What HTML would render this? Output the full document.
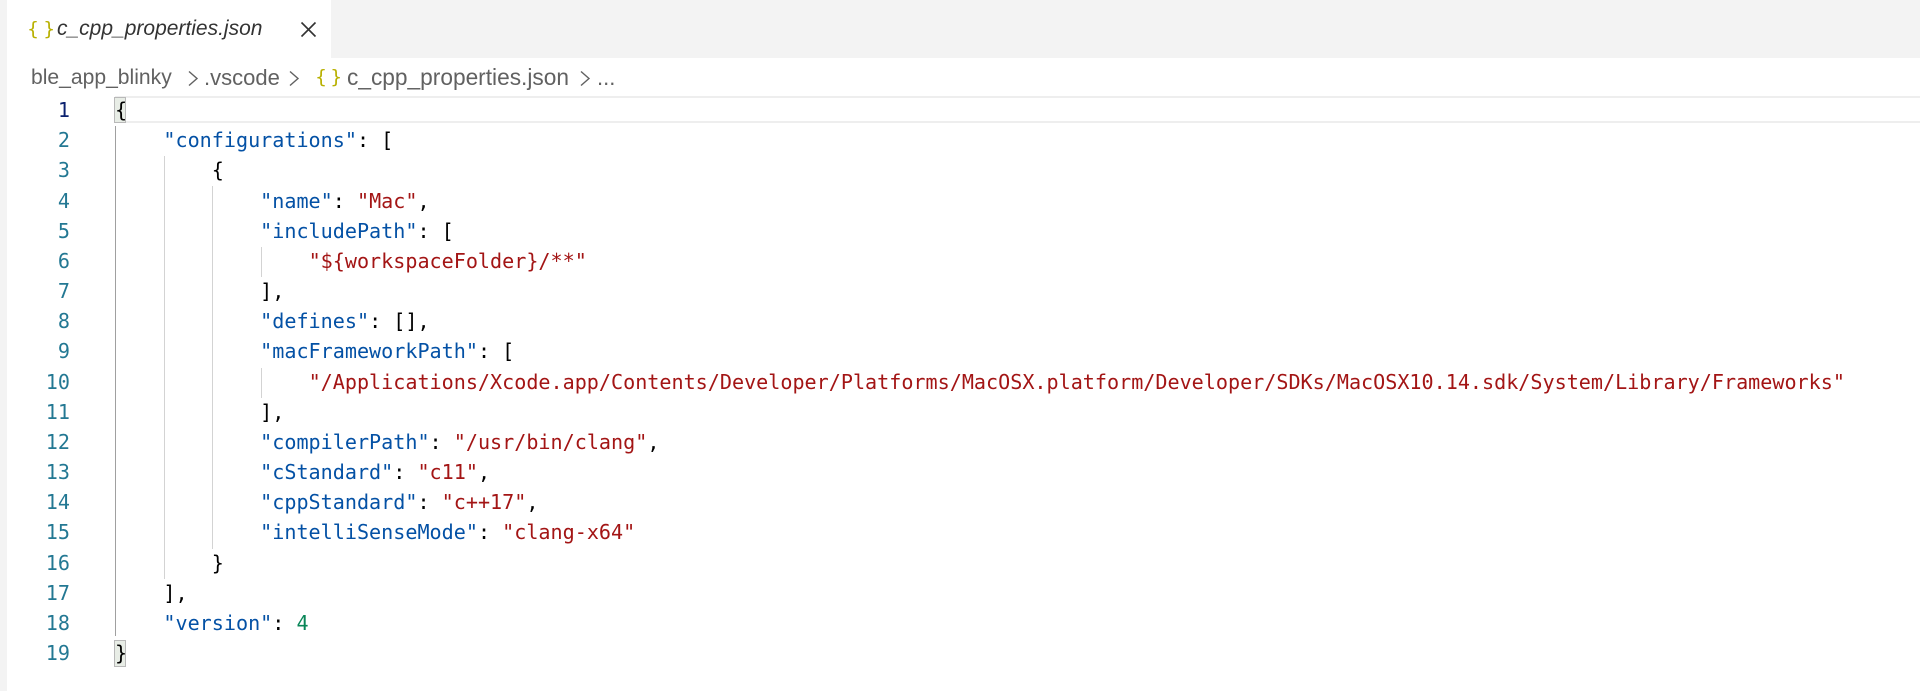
<!DOCTYPE html>
<html><head><meta charset="utf-8"><style>
html,body{margin:0;padding:0;background:#fff;width:1920px;height:691px;overflow:hidden;position:relative;font-family:"Liberation Sans",sans-serif}
.strip{position:absolute;left:0;top:0;width:7px;height:691px;background:#f3f3f3}
.tabbar{position:absolute;left:0;top:0;width:1920px;height:58px;background:#f3f3f3}
.tab{position:absolute;left:7px;top:0;width:324px;height:58px;background:#fff}
.t{position:absolute;white-space:pre;line-height:1}
.icb{color:#b8b000;font-family:"DejaVu Sans",sans-serif}
.bc{color:#616161;font-size:22px}
.cur{position:absolute;left:115px;top:96px;width:1805px;height:27px;border-top:2px solid #eee;border-bottom:2px solid #eee;box-sizing:border-box}
.code{position:absolute;left:0;top:95px;font-family:"DejaVu Sans Mono",monospace;font-size:20.1px}
.ln{position:absolute;left:0;width:70px;text-align:right;color:#237893;height:30.17px;line-height:30.17px}
.l{position:absolute;left:115px;white-space:pre;height:30.17px;line-height:30.17px;color:#000}
.k{color:#0451a5}.s{color:#a31515}.n{color:#098658}
.g{position:absolute;width:1px;background:#d3d3d3}
.bm{position:absolute;background:#e8ede6;border:1px solid #b9b9b9;box-sizing:border-box}
</style></head><body>
<div class="tabbar"></div>
<div class="strip"></div>
<div class="tab"></div>
<div class="t icb" style="left:27px;top:20px;font-size:19px">{<span style="margin-left:4px">}</span></div>
<div class="t" style="left:57px;top:18px;font-size:21px;font-style:italic;color:#333">c_cpp_properties.json</div>
<svg style="position:absolute;left:300px;top:21px" width="17" height="17" viewBox="0 0 17 17"><path d="M1.5 1.5L15.5 15.5M15.5 1.5L1.5 15.5" stroke="#333" stroke-width="1.6" fill="none"/></svg>
<div class="t bc" style="left:31px;top:67px;font-size:21.1px">ble_app_blinky</div>
<svg style="position:absolute;left:187px;top:70px" width="12" height="17"><path d="M2 1.5L10 8.5L2 15.5" stroke="#616161" stroke-width="1.4" fill="none"/></svg>
<div class="t bc" style="left:204px;top:67px">.vscode</div>
<svg style="position:absolute;left:288px;top:70px" width="12" height="17"><path d="M2 1.5L10 8.5L2 15.5" stroke="#616161" stroke-width="1.4" fill="none"/></svg>
<div class="t icb" style="left:315px;top:68px;font-size:19px">{<span style="margin-left:3px">}</span></div>
<div class="t bc" style="left:347px;top:66px;font-size:22.7px">c_cpp_properties.json</div>
<svg style="position:absolute;left:579px;top:70px" width="12" height="17"><path d="M2 1.5L10 8.5L2 15.5" stroke="#616161" stroke-width="1.4" fill="none"/></svg>
<div class="t bc" style="left:597px;top:67px">...</div>
<div class="cur"></div>
<div class="bm" style="left:114px;top:97px;width:12px;height:26px"></div>
<div class="bm" style="left:114px;top:640px;width:12px;height:27px"></div>
<div class="g" style="left:115px;top:126px;height:510px;background:#a0a0a0"></div>
<div class="g" style="left:164px;top:156px;height:423px"></div>
<div class="g" style="left:212px;top:186px;height:363px"></div>
<div class="g" style="left:261px;top:247px;height:30px"></div>
<div class="g" style="left:261px;top:368px;height:30px"></div>
<div class="code">
<div class="ln" style="top:0;color:#0b216f">1</div><div class="l" style="top:0">{</div>
<div class="ln" style="top:30.17px">2</div><div class="l" style="top:30.17px">    <span class="k">"configurations"</span>: [</div>
<div class="ln" style="top:60.34px">3</div><div class="l" style="top:60.34px">        {</div>
<div class="ln" style="top:90.51px">4</div><div class="l" style="top:90.51px">            <span class="k">"name"</span>: <span class="s">"Mac"</span>,</div>
<div class="ln" style="top:120.68px">5</div><div class="l" style="top:120.68px">            <span class="k">"includePath"</span>: [</div>
<div class="ln" style="top:150.85px">6</div><div class="l" style="top:150.85px">                <span class="s">"${workspaceFolder}/**"</span></div>
<div class="ln" style="top:181.02px">7</div><div class="l" style="top:181.02px">            ],</div>
<div class="ln" style="top:211.19px">8</div><div class="l" style="top:211.19px">            <span class="k">"defines"</span>: [],</div>
<div class="ln" style="top:241.36px">9</div><div class="l" style="top:241.36px">            <span class="k">"macFrameworkPath"</span>: [</div>
<div class="ln" style="top:271.53px">10</div><div class="l" style="top:271.53px">                <span class="s">"/Applications/Xcode.app/Contents/Developer/Platforms/MacOSX.platform/Developer/SDKs/MacOSX10.14.sdk/System/Library/Frameworks"</span></div>
<div class="ln" style="top:301.7px">11</div><div class="l" style="top:301.7px">            ],</div>
<div class="ln" style="top:331.87px">12</div><div class="l" style="top:331.87px">            <span class="k">"compilerPath"</span>: <span class="s">"/usr/bin/clang"</span>,</div>
<div class="ln" style="top:362.04px">13</div><div class="l" style="top:362.04px">            <span class="k">"cStandard"</span>: <span class="s">"c11"</span>,</div>
<div class="ln" style="top:392.21px">14</div><div class="l" style="top:392.21px">            <span class="k">"cppStandard"</span>: <span class="s">"c++17"</span>,</div>
<div class="ln" style="top:422.38px">15</div><div class="l" style="top:422.38px">            <span class="k">"intelliSenseMode"</span>: <span class="s">"clang-x64"</span></div>
<div class="ln" style="top:452.55px">16</div><div class="l" style="top:452.55px">        }</div>
<div class="ln" style="top:482.72px">17</div><div class="l" style="top:482.72px">    ],</div>
<div class="ln" style="top:512.89px">18</div><div class="l" style="top:512.89px">    <span class="k">"version"</span>: <span class="n">4</span></div>
<div class="ln" style="top:543.06px">19</div><div class="l" style="top:543.06px">}</div>
</div>
</body></html>
